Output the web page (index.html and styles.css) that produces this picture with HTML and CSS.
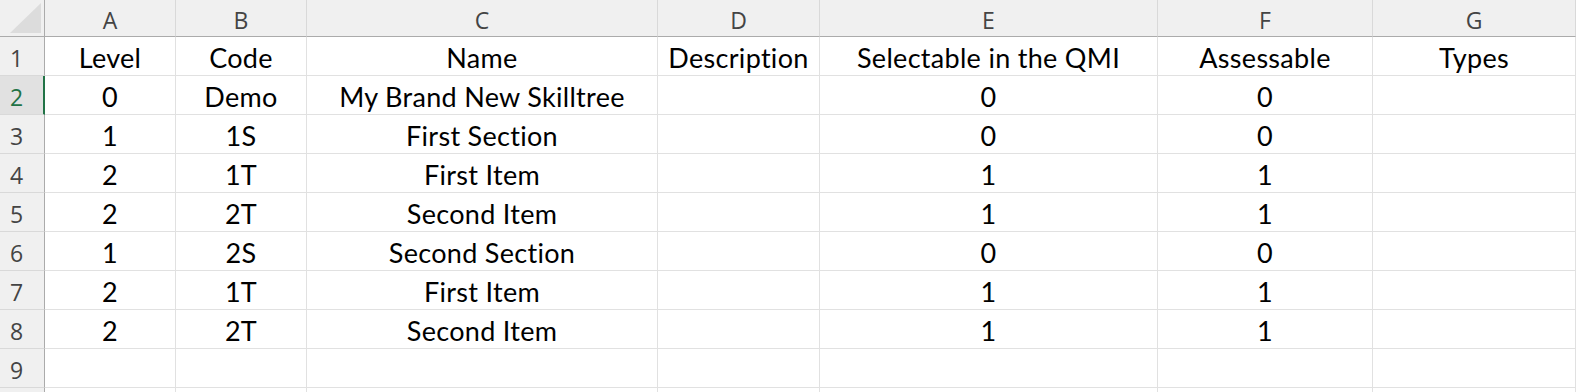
FILE: index.html
```html
<!DOCTYPE html>
<html>
<head>
<meta charset="utf-8">
<link rel="stylesheet" href="styles.css">
</head>
<body>
<div class="sheet">
  <div class="corner"><svg width="44" height="36" viewBox="0 0 44 36"><polygon points="10,33 41,3 41,33" fill="#dcdcdc"/></svg></div>
  <div class="colhead">A</div>
  <div class="colhead">B</div>
  <div class="colhead">C</div>
  <div class="colhead">D</div>
  <div class="colhead">E</div>
  <div class="colhead">F</div>
  <div class="colhead">G</div>
  <div class="colhead"></div>

  <div class="rowhead">1</div>
  <div class="cell">Level</div><div class="cell">Code</div><div class="cell">Name</div><div class="cell">Description</div><div class="cell">Selectable in the QMI</div><div class="cell">Assessable</div><div class="cell">Types</div><div class="cell"></div>

  <div class="rowhead active">2</div>
  <div class="cell">0</div><div class="cell">Demo</div><div class="cell">My Brand New Skilltree</div><div class="cell"></div><div class="cell">0</div><div class="cell">0</div><div class="cell"></div><div class="cell"></div>

  <div class="rowhead">3</div>
  <div class="cell">1</div><div class="cell">1S</div><div class="cell">First Section</div><div class="cell"></div><div class="cell">0</div><div class="cell">0</div><div class="cell"></div><div class="cell"></div>

  <div class="rowhead">4</div>
  <div class="cell">2</div><div class="cell">1T</div><div class="cell">First Item</div><div class="cell"></div><div class="cell">1</div><div class="cell">1</div><div class="cell"></div><div class="cell"></div>

  <div class="rowhead">5</div>
  <div class="cell">2</div><div class="cell">2T</div><div class="cell">Second Item</div><div class="cell"></div><div class="cell">1</div><div class="cell">1</div><div class="cell"></div><div class="cell"></div>

  <div class="rowhead">6</div>
  <div class="cell">1</div><div class="cell">2S</div><div class="cell">Second Section</div><div class="cell"></div><div class="cell">0</div><div class="cell">0</div><div class="cell"></div><div class="cell"></div>

  <div class="rowhead">7</div>
  <div class="cell">2</div><div class="cell">1T</div><div class="cell">First Item</div><div class="cell"></div><div class="cell">1</div><div class="cell">1</div><div class="cell"></div><div class="cell"></div>

  <div class="rowhead">8</div>
  <div class="cell">2</div><div class="cell">2T</div><div class="cell">Second Item</div><div class="cell"></div><div class="cell">1</div><div class="cell">1</div><div class="cell"></div><div class="cell"></div>

  <div class="rowhead">9</div>
  <div class="cell"></div><div class="cell"></div><div class="cell"></div><div class="cell"></div><div class="cell"></div><div class="cell"></div><div class="cell"></div><div class="cell"></div>

  <div class="rowhead"></div>
  <div class="cell"></div><div class="cell"></div><div class="cell"></div><div class="cell"></div><div class="cell"></div><div class="cell"></div><div class="cell"></div><div class="cell"></div>
</div>
</body>
</html>
```
FILE: styles.css
```css
html, body {
  margin: 0;
  padding: 0;
  background: #ffffff;
  overflow: hidden;
}

.sheet {
  display: grid;
  grid-template-columns: 45px 131px 131px 351px 162px 338px 215px 203px 1fr;
  grid-template-rows: 37px;
  grid-auto-rows: 39px;
  width: 1576px;
  height: 392px;
  overflow: hidden;
}

.sheet > div {
  box-sizing: border-box;
}

.corner {
  background: #f0f0f0;
  border-right: 1px solid #ababab;
  border-bottom: 1px solid #ababab;
  display: flex;
}

.colhead {
  background: #f0f0f0;
  border-right: 1px solid #d9d9d9;
  border-bottom: 1px solid #ababab;
  font-family: "Open Sans", "Noto Sans", sans-serif;
  font-size: 23px;
  color: #444444;
  display: flex;
  align-items: center;
  justify-content: center;
  padding-top: 4px;
}

.rowhead {
  background: #f0f0f0;
  border-right: 1px solid #ababab;
  border-bottom: 1px solid #d9d9d9;
  font-family: "Open Sans", "Noto Sans", sans-serif;
  font-size: 23px;
  color: #444444;
  display: flex;
  align-items: center;
  padding-left: 10px;
  padding-top: 4px;
}

.rowhead.active {
  background: #e1e1e1;
  color: #217346;
  border-right: 2px solid #217346;
}

.cell {
  border-right: 1px solid #e1e1e1;
  border-bottom: 1px solid #e1e1e1;
  font-family: "Lato", "Carlito", sans-serif;
  font-size: 27px;
  letter-spacing: 0.3px;
  line-height: 30px;
  color: #000000;
  display: flex;
  align-items: flex-end;
  justify-content: center;
  padding-bottom: 2px;
  white-space: nowrap;
}
```
